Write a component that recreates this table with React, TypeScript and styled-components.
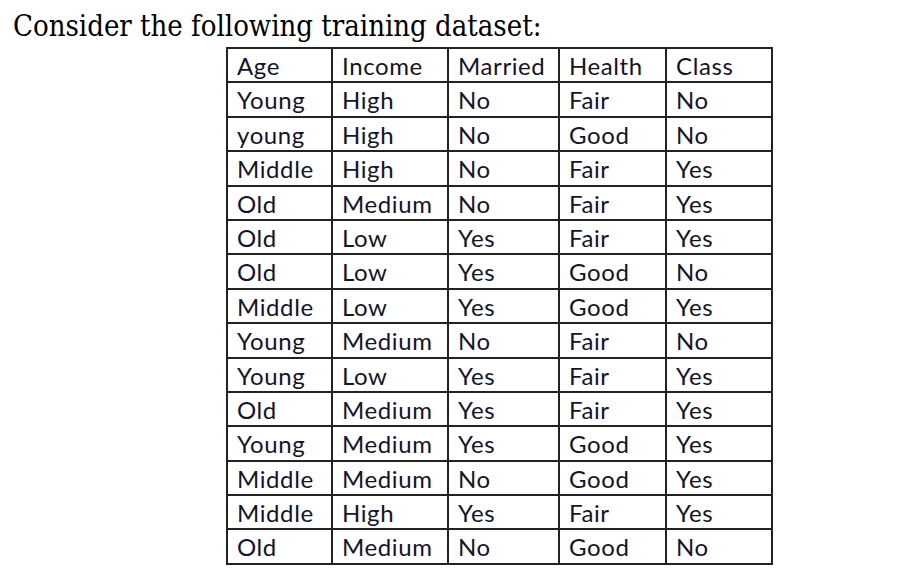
import React from 'react'
import styled, { createGlobalStyle } from 'styled-components'

const GlobalStyle = createGlobalStyle`
  html, body {
    margin: 0;
    padding: 0;
    background: #ffffff;
  }
`

const headers = ['Age', 'Income', 'Married', 'Health', 'Class']

const rows: string[][] = [
  ['Young', 'High', 'No', 'Fair', 'No'],
  ['young', 'High', 'No', 'Good', 'No'],
  ['Middle', 'High', 'No', 'Fair', 'Yes'],
  ['Old', 'Medium', 'No', 'Fair', 'Yes'],
  ['Old', 'Low', 'Yes', 'Fair', 'Yes'],
  ['Old', 'Low', 'Yes', 'Good', 'No'],
  ['Middle', 'Low', 'Yes', 'Good', 'Yes'],
  ['Young', 'Medium', 'No', 'Fair', 'No'],
  ['Young', 'Low', 'Yes', 'Fair', 'Yes'],
  ['Old', 'Medium', 'Yes', 'Fair', 'Yes'],
  ['Young', 'Medium', 'Yes', 'Good', 'Yes'],
  ['Middle', 'Medium', 'No', 'Good', 'Yes'],
  ['Middle', 'High', 'Yes', 'Fair', 'Yes'],
  ['Old', 'Medium', 'No', 'Good', 'No'],
]

export default function App() {
  return (
    <Page>
      <GlobalStyle />
      <Title>Consider the following training dataset:</Title>
      <Table>
        {[headers, ...rows].map((row, r) =>
          row.map((value, c) => <Cell key={`${r}-${c}`}>{value}</Cell>),
        )}
      </Table>
    </Page>
  )
}

const Page = styled.div`
  width: 898px;
  height: 574px;
  overflow: hidden;
  box-sizing: border-box;
  padding: 6px 0 0 13px;
`

const Title = styled.h1`
  margin: 0;
  font-family: 'DejaVu Serif Condensed', 'DejaVu Serif', serif;
  font-stretch: condensed;
  font-weight: 400;
  font-size: 29px;
  line-height: 40px;
  color: #000;
  white-space: nowrap;
`

const Table = styled.div`
  display: grid;
  grid-template-columns: 105px 116px 111px 107px 106px;
  grid-auto-rows: 34.4px;
  margin: 1px 0 0 213px;
  width: max-content;
  border-top: 2px solid #222;
  border-left: 2px solid #222;
`

const Cell = styled.div`
  box-sizing: border-box;
  border-right: 2px solid #222;
  border-bottom: 2px solid #222;
  padding: 3px 0 0 9px;
  font-family: Lato, 'Liberation Sans', sans-serif;
  font-size: 24px;
  letter-spacing: 0.6px;
  line-height: 28px;
  color: #14142a;
  white-space: nowrap;
`
